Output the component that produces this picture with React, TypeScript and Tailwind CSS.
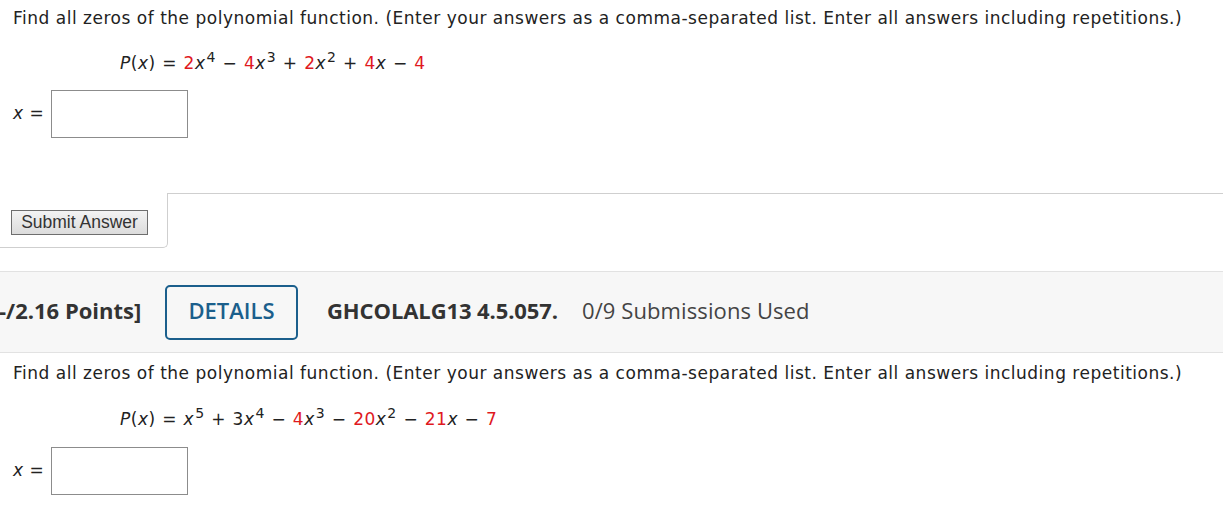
import React from "react";

const red = "text-[#e0191e]";

function Sup({ children }: { children: React.ReactNode }) {
    return <sup className="text-[14px] top-[-7px] ml-[1px]">{children}</sup>;
}

function Op({ children }: { children: React.ReactNode }) {
    return <span className="px-[6.6px]">{children}</span>;
}

function Answer() {
    return (
        <div className="flex items-center h-[47px]">
            <span className="w-[51px] pl-[13px] whitespace-nowrap">
                <i>x</i> =
            </span>
            <div className="w-[137px] h-[48px] border border-[#8c8c8c] bg-white" />
        </div>
    );
}

export default function App() {
    return (
        <div className="w-[1223px] h-[532px] overflow-hidden bg-white text-[#222] text-[17px] tracking-[0.51px] font-['DejaVu_Sans',Verdana,sans-serif]">
            {/* question 1 */}
            <div className="pt-[6px]">
                <p className="pl-[13px] h-[24px] leading-[24px] whitespace-nowrap">
                    Find all zeros of the polynomial function. (Enter your answers as a comma-separated list. Enter all answers including repetitions.)
                </p>
                <div className="pl-[120px] mt-[21px] h-[24px] leading-[24px] whitespace-nowrap">
                    <i>P</i>(<i>x</i>)<Op>=</Op>
                    <span className={red}>2</span>
                    <i>x</i>
                    <Sup>4</Sup>
                    <Op>−</Op>
                    <span className={red}>4</span>
                    <i>x</i>
                    <Sup>3</Sup>
                    <Op>+</Op>
                    <span className={red}>2</span>
                    <i>x</i>
                    <Sup>2</Sup>
                    <Op>+</Op>
                    <span className={red}>4</span>
                    <i>x</i>
                    <Op>−</Op>
                    <span className={red}>4</span>
                </div>
                <div className="mt-[15px]">
                    <Answer />
                </div>
            </div>

            {/* submit */}
            <div className="flex mt-[56px]">
                <div className="w-[168px] h-[55px] border-r border-b border-[#cfcfcf] rounded-br-[5px] flex items-center pl-[11px] pt-[5px]">
                    <button className="h-[25px] w-[137px] border border-[#6e6e6e] bg-gradient-to-b from-[#f3f3f3] to-[#dcdcdc] text-[#333] text-[17.5px] tracking-normal leading-none font-['Liberation_Sans',Arial,sans-serif]">
                        Submit Answer
                    </button>
                </div>
                <div className="flex-1 border-t border-[#cfcfcf]" />
            </div>

            {/* header bar */}
            <div className="mt-[23px] h-[82px] bg-[#f7f7f7] border-y border-[#e2e2e2] flex items-center pb-[3px] tracking-normal font-['Open_Sans',sans-serif]">
                <span className="w-[166px] -ml-[1px] text-[22px] font-bold text-[#333] tracking-[0px] whitespace-nowrap">-/2.16 Points]</span>
                <div className="w-[133px] h-[55px] mt-[3px] rounded-[5px] border-2 border-[#1b5f8c] flex items-center justify-center pb-[3px] text-[#1b5f8c] text-[22px] font-semibold tracking-[0px]">
                    DETAILS
                </div>
                <span className="ml-[29px] text-[22px] font-bold text-[#333] tracking-[-0.1px] whitespace-nowrap">GHCOLALG13 4.5.057.</span>
                <span className="ml-[24px] text-[22px] text-[#444] tracking-[0.1px] whitespace-nowrap">0/9 Submissions Used</span>
            </div>

            {/* question 2 */}
            <div className="pt-[8px]">
                <p className="pl-[13px] h-[24px] leading-[24px] whitespace-nowrap">
                    Find all zeros of the polynomial function. (Enter your answers as a comma-separated list. Enter all answers including repetitions.)
                </p>
                <div className="pl-[120px] mt-[22px] h-[24px] leading-[24px] whitespace-nowrap">
                    <i>P</i>(<i>x</i>)<Op>=</Op>
                    <i>x</i>
                    <Sup>5</Sup>
                    <Op>+</Op>3<i>x</i>
                    <Sup>4</Sup>
                    <Op>−</Op>
                    <span className={red}>4</span>
                    <i>x</i>
                    <Sup>3</Sup>
                    <Op>−</Op>
                    <span className={red}>20</span>
                    <i>x</i>
                    <Sup>2</Sup>
                    <Op>−</Op>
                    <span className={red}>21</span>
                    <i>x</i>
                    <Op>−</Op>
                    <span className={red}>7</span>
                </div>
                <div className="mt-[16px]">
                    <Answer />
                </div>
            </div>
        </div>
    );
}
